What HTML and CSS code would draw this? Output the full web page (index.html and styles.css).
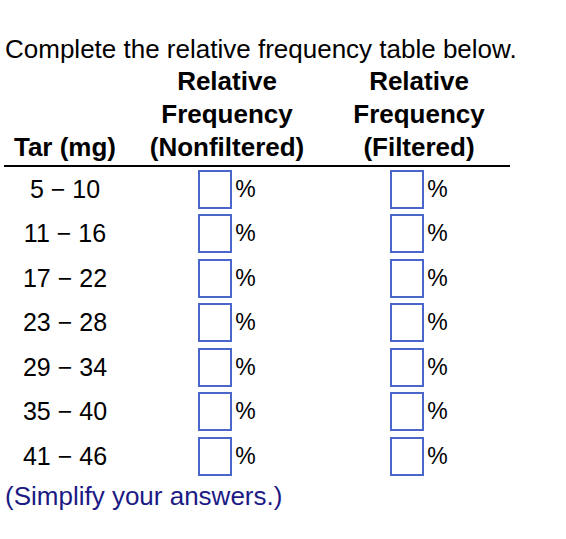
FILE: index.html
```html
<!DOCTYPE html>
<html>
<head>
<meta charset="utf-8">
<link rel="stylesheet" href="styles.css">
</head>
<body>
<div class="page">
  <p class="prompt">Complete the relative frequency table below.</p>
  <table class="freq">
    <thead>
      <tr>
        <th class="c1">Tar (mg)</th>
        <th class="c2">Relative<br>Frequency<br>(Nonfiltered)</th>
        <th class="c3">Relative<br>Frequency<br>(Filtered)</th>
      </tr>
    </thead>
    <tbody>
      <tr><td class="range">5 − 10</td><td><span class="box"></span><span class="pct">%</span></td><td><span class="box"></span><span class="pct">%</span></td></tr>
      <tr><td class="range">11 − 16</td><td><span class="box"></span><span class="pct">%</span></td><td><span class="box"></span><span class="pct">%</span></td></tr>
      <tr><td class="range">17 − 22</td><td><span class="box"></span><span class="pct">%</span></td><td><span class="box"></span><span class="pct">%</span></td></tr>
      <tr><td class="range">23 − 28</td><td><span class="box"></span><span class="pct">%</span></td><td><span class="box"></span><span class="pct">%</span></td></tr>
      <tr><td class="range">29 − 34</td><td><span class="box"></span><span class="pct">%</span></td><td><span class="box"></span><span class="pct">%</span></td></tr>
      <tr><td class="range">35 − 40</td><td><span class="box"></span><span class="pct">%</span></td><td><span class="box"></span><span class="pct">%</span></td></tr>
      <tr><td class="range">41 − 46</td><td><span class="box"></span><span class="pct">%</span></td><td><span class="box"></span><span class="pct">%</span></td></tr>
    </tbody>
  </table>
  <p class="note">(Simplify your answers.)</p>
</div>
</body>
</html>
```
FILE: styles.css
```css
html, body {
  margin: 0;
  padding: 0;
  background: #ffffff;
}
.page {
  padding: 34px 0 0 4px;
  font-family: "Liberation Sans", Arial, sans-serif;
  color: #000;
}
.prompt {
  margin: 0;
  padding-left: 1px;
  font-size: 26px;
  line-height: 31px;
  white-space: nowrap;
}
.freq {
  border-collapse: collapse;
  margin: 0;
}
.freq th {
  font-size: 26px;
  font-weight: bold;
  line-height: 33px;
  text-align: center;
  vertical-align: bottom;
  padding: 0 0 1px;
  border-bottom: 2px solid #000;
}
.freq .c1 { width: 122px; }
.freq .c2 { width: 202px; }
.freq .c3 { width: 182px; }
.freq td {
  height: 44.5px;
  padding: 0;
  text-align: center;
  vertical-align: middle;
  font-size: 25px;
}
.box {
  display: inline-block;
  box-sizing: border-box;
  width: 34px;
  height: 39px;
  border: 2px solid #4a66c8;
  vertical-align: middle;
  margin-right: 3px;
}
.pct {
  vertical-align: middle;
  font-size: 23px;
}
.note {
  margin: 2px 0 0;
  padding-left: 1px;
  font-size: 26px;
  line-height: 30px;
  color: #1c1a84;
}
```
